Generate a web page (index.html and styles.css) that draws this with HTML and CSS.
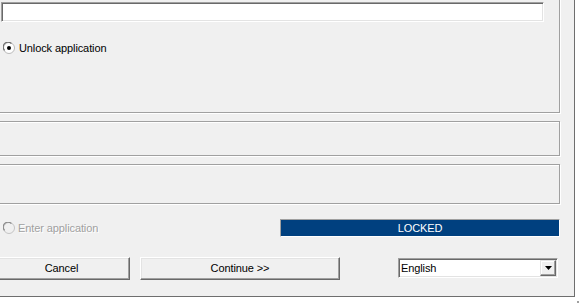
FILE: index.html
```html
<!DOCTYPE html>
<html>
<head>
<meta charset="utf-8">
<link rel="stylesheet" href="styles.css">
</head>
<body>
<div class="dialog">
  <div class="group group-main">
    <div class="textbox"></div>
    <label class="radio">
      <svg class="radio-icon" width="12" height="12" viewBox="0 0 12 12">
        <circle cx="6" cy="6" r="5.5" fill="#fff" stroke="#b9b9b9" stroke-width="1"/>
        <path d="M1.6 8.4 A4.6 4.6 0 0 1 8.4 1.6" fill="none" stroke="#6e6e6e" stroke-width="1.2"/>
        <circle cx="6" cy="6" r="2" fill="#000"/>
      </svg>
      <span>Unlock application</span>
    </label>
  </div>
  <div class="group group-b"></div>
  <div class="group group-c"></div>
  <div class="status-row">
    <label class="radio disabled">
      <svg class="radio-icon" width="12" height="12" viewBox="0 0 12 12">
        <circle cx="6" cy="6" r="5.5" fill="#f0f0f0" stroke="#c4c4c4" stroke-width="1"/>
        <path d="M1.6 8.4 A4.6 4.6 0 0 1 8.4 1.6" fill="none" stroke="#8a8a8a" stroke-width="1.2"/>
      </svg>
      <span>Enter application</span>
    </label>
    <div class="status-bar">LOCKED</div>
  </div>
  <div class="button-row">
    <div class="button cancel">Cancel</div>
    <div class="button continue">Continue &gt;&gt;</div>
    <div class="combo">
      <span class="combo-text">English</span>
      <span class="combo-btn">
        <svg width="7" height="4" viewBox="0 0 7 4"><path d="M0 0 H7 L3.5 4 Z" fill="#000"/></svg>
      </span>
    </div>
  </div>
</div>
<div class="grip"></div>
</body>
</html>
```

FILE: styles.css
```css
html, body {
  margin: 0;
  padding: 0;
}
body {
  width: 580px;
  height: 304px;
  overflow: hidden;
  background: #ffffff;
  font-family: "Liberation Sans", Arial, sans-serif;
  font-size: 11px;
  letter-spacing: -0.1px;
  color: #000;
  position: relative;
}
.dialog {
  box-sizing: border-box;
  margin-left: -20px;
  width: 595px;
  height: 297px;
  padding: 0 14px 0 10px;
  background: #f0f0f0;
  border-right: 1px solid #6e6e6e;
  border-bottom: 1px solid #6e6e6e;
  display: flex;
  flex-direction: column;
}
.group {
  box-sizing: border-box;
  width: 570px;
  border: 1px solid #a0a0a0;
  box-shadow: 1px 1px 0 #fff, inset 1px 1px 0 #fff;
}
.group-main {
  margin-top: -20px;
  height: 133px;
  padding: 21px 0 0 10px;
  display: flex;
  flex-direction: column;
}
.group-b {
  margin-top: 8px;
  height: 35px;
}
.group-c {
  margin-top: 8px;
  height: 40px;
}
.textbox {
  box-sizing: border-box;
  width: 543px;
  height: 20px;
  background: #fff;
  border: 1px solid;
  border-color: #a0a0a0 #fff #fff #a0a0a0;
  box-shadow: inset 1px 1px 0 #696969, inset -1px -1px 0 #e3e3e3;
}
.radio {
  display: flex;
  align-items: center;
  height: 13px;
  gap: 4px;
}
.group-main .radio {
  margin-top: 19px;
  margin-left: 2px;
}
.radio-icon {
  display: block;
  flex: none;
}
.radio.disabled {
  color: #a0a0a0;
  text-shadow: 1px 1px 0 #fff;
  margin-left: 13px;
  gap: 3px;
}
.status-row {
  margin-top: 15px;
  display: flex;
  justify-content: space-between;
  align-items: center;
  height: 18px;
}
.status-bar {
  box-sizing: border-box;
  width: 280px;
  height: 18px;
  background: #00407f;
  border: 1px solid;
  border-color: #a0a0a0 #fff #fff #a0a0a0;
  color: #fff;
  display: flex;
  align-items: center;
  justify-content: center;
  line-height: 1;
}
.button-row {
  margin-top: 20px;
  display: flex;
  align-items: flex-start;
}
.button {
  box-sizing: border-box;
  height: 23px;
  border: 1px solid;
  border-color: #fff #696969 #696969 #fff;
  box-shadow: inset -1px -1px 0 #a0a0a0, inset 1px 1px 0 #e3e3e3;
  display: flex;
  align-items: center;
  justify-content: center;
  padding-bottom: 1px;
}
.cancel {
  margin-left: 3px;
  width: 137px;
}
.continue {
  margin-left: 10px;
  width: 200px;
}
.combo {
  box-sizing: border-box;
  margin-left: 58px;
  margin-top: 1px;
  width: 160px;
  height: 20px;
  background: #fff;
  border: 1px solid;
  border-color: #a0a0a0 #fff #fff #a0a0a0;
  box-shadow: inset 1px 1px 0 #696969, inset -1px -1px 0 #e3e3e3;
  display: flex;
  align-items: center;
  padding: 1px 1px 1px 2px;
}
.combo-text {
  flex: 1;
}
.combo-btn {
  box-sizing: border-box;
  width: 16px;
  height: 16px;
  background: #f0f0f0;
  border: 1px solid;
  border-color: #e3e3e3 #696969 #696969 #e3e3e3;
  box-shadow: inset -1px -1px 0 #a0a0a0, inset 1px 1px 0 #fff;
  display: flex;
  align-items: center;
  justify-content: center;
}
.combo-btn svg {
  display: block;
}
.grip {
  position: absolute;
  right: 1px;
  bottom: 1px;
  width: 2px;
  height: 2px;
  background: #a0a0a0;
}
```
